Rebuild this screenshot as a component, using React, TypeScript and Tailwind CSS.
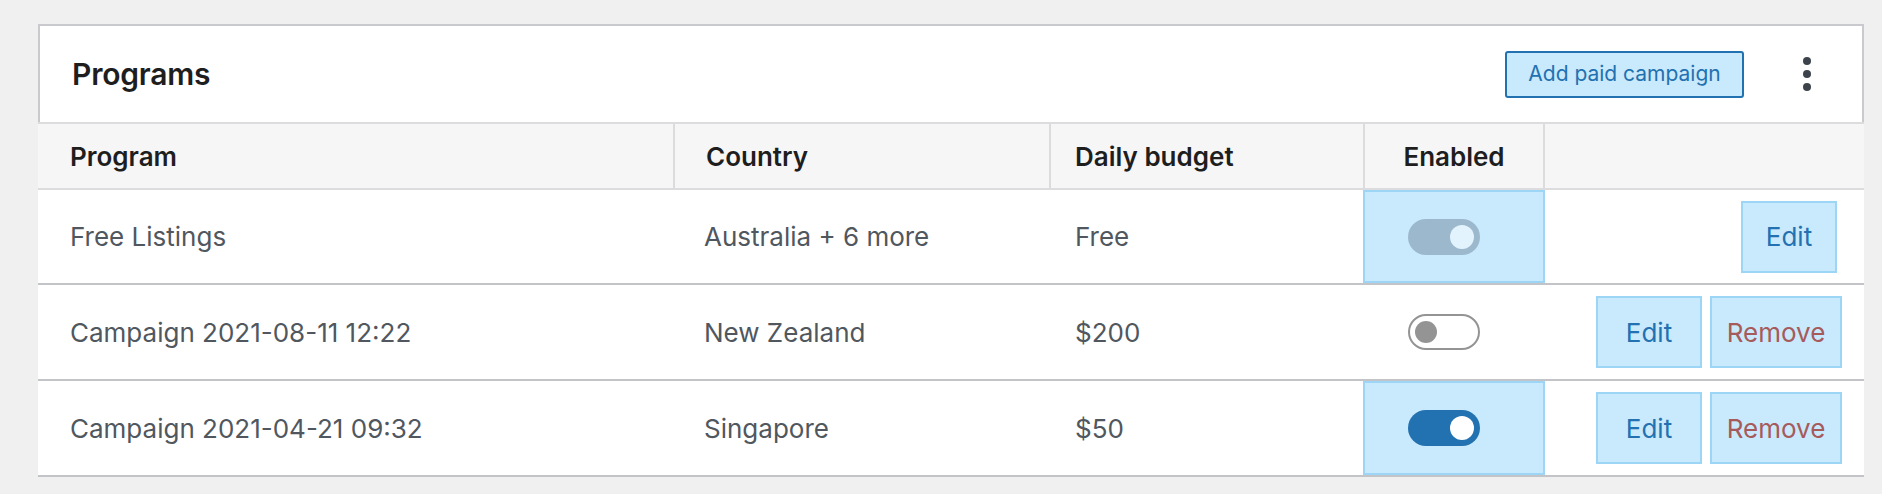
import React from 'react';

type Row = {
  id: string;
  name: string;
  country: string;
  budget: string;
  enabled: 'on' | 'off' | 'locked';
  removable: boolean;
};

const rows: Row[] = [
  { id: 'free', name: 'Free Listings', country: 'Australia + 6 more', budget: 'Free', enabled: 'locked', removable: false },
  { id: 'nz', name: 'Campaign 2021-08-11 12:22', country: 'New Zealand', budget: '$200', enabled: 'off', removable: true },
  { id: 'sg', name: 'Campaign 2021-04-21 09:32', country: 'Singapore', budget: '$50', enabled: 'on', removable: true },
];

const gridCols = 'grid grid-cols-[635px_376px_314px_182px_1fr]';

const Toggle = ({ state }: { state: Row['enabled'] }) => {
  if (state === 'off') {
    return (
      <span className="flex items-center w-[72px] h-[36px] rounded-full border-2 border-[#949494] bg-white px-[5px]">
        <span className="w-[22px] h-[22px] rounded-full bg-[#949494]" />
      </span>
    );
  }
  return (
    <span
      className={`flex items-center justify-end w-[72px] h-[36px] rounded-full px-[6px] ${
        state === 'on' ? 'bg-[#2271b1]' : 'bg-[#9cb8cd]'
      }`}
    >
      <span className={`w-[24px] h-[24px] rounded-full ${state === 'on' ? 'bg-white' : 'bg-[#e3f3fd]'}`} />
    </span>
  );
};

const ActionButton = ({ label, danger, wide }: { label: string; danger?: boolean; wide?: boolean }) => (
  <button
    className={`h-[72px] border-2 border-[#9dd5f7] bg-[#c9e9fc] text-[26px] ${
      danger ? 'w-[132px] text-[#a65a5a]' : wide ? 'w-[106px] text-[#2271b1]' : 'w-[96px] text-[#2271b1]'
    }`}
  >
    {label}
  </button>
);

const App = () => {
  return (
    <div className="min-h-[494px] bg-[#f0f0f1] pt-[24px] pl-[38px] pr-[18px] font-['Inter','Liberation_Sans',sans-serif]">
      {/* Card header */}
      <div className="flex items-center h-[98px] bg-white border-2 border-b-0 border-[#c9cacd] pl-[32px] pr-[51px]">
        <h2 className="text-[30px] font-semibold text-[#1e1e1e] tracking-[-0.2px]">Programs</h2>
        <div className="ml-auto flex items-center gap-[59px]">
          <button className="h-[47px] w-[239px] rounded-[3px] border-2 border-[#2271b1] bg-[#c9e9fc] text-[21px] text-[#2271b1]">
            Add paid campaign
          </button>
          <span className="flex flex-col gap-[5px]">
            <span className="w-[8px] h-[8px] rounded-full bg-[#3c434a]" />
            <span className="w-[8px] h-[8px] rounded-full bg-[#3c434a]" />
            <span className="w-[8px] h-[8px] rounded-full bg-[#3c434a]" />
          </span>
        </div>
      </div>

      {/* Table header */}
      <div className={`${gridCols} h-[68px] bg-[#f6f6f7] border-y-2 border-[#dcdcde] text-[26px] font-semibold text-[#1e1e1e]`}>
        <div className="flex items-center pl-[32px]">Program</div>
        <div className="flex items-center pl-[31px] border-l-2 border-[#dcdcde]">Country</div>
        <div className="flex items-center pl-[24px] border-l-2 border-[#dcdcde]">Daily budget</div>
        <div className="flex items-center justify-center border-x-2 border-[#dcdcde]">Enabled</div>
        <div />
      </div>

      {/* Rows */}
      {rows.map((row, i) => (
        <div
          key={row.id}
          className={`${gridCols} bg-white border-b-2 border-[#c3c4c7] text-[26px] text-[#50575e] ${
            i === 0 ? 'h-[95px]' : 'h-[96px]'
          }`}
        >
          <div className="flex items-center pl-[32px]">{row.name}</div>
          <div className="flex items-center pl-[31px]">{row.country}</div>
          <div className="flex items-center pl-[26px]">{row.budget}</div>
          <div
            className={`flex items-center justify-center pr-[20px] ${
              row.enabled === 'off' ? '' : 'bg-[#c9e9fc] border-2 border-[#9dd5f7]'
            }`}
          >
            <Toggle state={row.enabled} />
          </div>
          <div className={`flex items-center justify-end gap-[8px] ${row.removable ? 'pr-[22px]' : 'pr-[27px]'}`}>
            <ActionButton label="Edit" wide={row.removable} />
            {row.removable && <ActionButton label="Remove" danger />}
          </div>
        </div>
      ))}
    </div>
  );
};

export default App;
